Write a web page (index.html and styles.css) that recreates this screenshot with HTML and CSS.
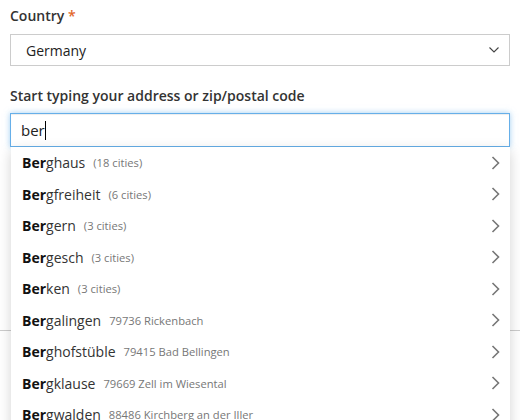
FILE: index.html
```html
<!DOCTYPE html>
<html>
<head>
<meta charset="utf-8">
<link rel="stylesheet" href="styles.css">
</head>
<body>
<div class="form">
  <div class="field">
    <label class="label">Country <span class="req">*</span></label>
    <div class="select">
      <span class="select-value">Germany</span>
      <svg class="select-caret" width="12" height="8" viewBox="0 0 12 8"><polyline points="1.5,1.5 6,6 10.5,1.5" fill="none" stroke="#444" stroke-width="1.1"/></svg>
    </div>
  </div>
  <div class="field field-address">
    <label class="label">Start typing your address or zip/postal code</label>
    <div class="input"><span class="input-text">ber</span><span class="caret"></span></div>
    <ul class="suggest">
      <li class="item"><span class="name"><b>Ber</b>ghaus</span><span class="meta">(18 cities)</span><svg class="chev" width="9" height="14" viewBox="0 0 9 14"><polyline points="1.5,1 7.5,7 1.5,13" fill="none" stroke="#777" stroke-width="1.6"/></svg></li>
      <li class="item"><span class="name"><b>Ber</b>gfreiheit</span><span class="meta">(6 cities)</span><svg class="chev" width="9" height="14" viewBox="0 0 9 14"><polyline points="1.5,1 7.5,7 1.5,13" fill="none" stroke="#777" stroke-width="1.6"/></svg></li>
      <li class="item"><span class="name"><b>Ber</b>gern</span><span class="meta">(3 cities)</span><svg class="chev" width="9" height="14" viewBox="0 0 9 14"><polyline points="1.5,1 7.5,7 1.5,13" fill="none" stroke="#777" stroke-width="1.6"/></svg></li>
      <li class="item"><span class="name"><b>Ber</b>gesch</span><span class="meta">(3 cities)</span><svg class="chev" width="9" height="14" viewBox="0 0 9 14"><polyline points="1.5,1 7.5,7 1.5,13" fill="none" stroke="#777" stroke-width="1.6"/></svg></li>
      <li class="item"><span class="name"><b>Ber</b>ken</span><span class="meta">(3 cities)</span><svg class="chev" width="9" height="14" viewBox="0 0 9 14"><polyline points="1.5,1 7.5,7 1.5,13" fill="none" stroke="#777" stroke-width="1.6"/></svg></li>
      <li class="item"><span class="name"><b>Ber</b>galingen</span><span class="meta">79736 Rickenbach</span><svg class="chev" width="9" height="14" viewBox="0 0 9 14"><polyline points="1.5,1 7.5,7 1.5,13" fill="none" stroke="#777" stroke-width="1.6"/></svg></li>
      <li class="item"><span class="name"><b>Ber</b>ghofstüble</span><span class="meta">79415 Bad Bellingen</span><svg class="chev" width="9" height="14" viewBox="0 0 9 14"><polyline points="1.5,1 7.5,7 1.5,13" fill="none" stroke="#777" stroke-width="1.6"/></svg></li>
      <li class="item"><span class="name"><b>Ber</b>gklause</span><span class="meta">79669 Zell im Wiesental</span><svg class="chev" width="9" height="14" viewBox="0 0 9 14"><polyline points="1.5,1 7.5,7 1.5,13" fill="none" stroke="#777" stroke-width="1.6"/></svg></li>
      <li class="item"><span class="name"><b>Ber</b>gwalden</span><span class="meta">88486 Kirchberg an der Iller</span><svg class="chev" width="9" height="14" viewBox="0 0 9 14"><polyline points="1.5,1 7.5,7 1.5,13" fill="none" stroke="#777" stroke-width="1.6"/></svg></li>
    </ul>
  </div>
  <div class="divider"></div>
</div>
</body>
</html>
```
FILE: styles.css
```css
html, body {
  margin: 0;
  padding: 0;
  background: #fff;
}
html {
  height: 420px;
  overflow: hidden;
}
body {
  height: 420px;
  overflow: hidden;
  font-family: "Open Sans", "Noto Sans", sans-serif;
  color: #333;
  font-size: 14px;
}
.form {
  padding: 6px 10px 0 10px;
}
.field {
  display: flex;
  flex-direction: column;
}
.label {
  font-weight: 600;
  font-size: 14px;
  line-height: 20px;
  color: #333;
  margin-bottom: 8px;
}
.req {
  color: #e2672b;
}
.select {
  height: 32px;
  box-sizing: border-box;
  border: 1px solid #ccc;
  display: flex;
  align-items: center;
  justify-content: space-between;
  padding: 0 9px 0 15px;
  margin-bottom: 20px;
}
.select-value {
  font-size: 14px;
  color: #222;
}
.field-address {
  position: relative;
}
.field-address .label {
  margin-bottom: 7px;
}
.input {
  height: 34px;
  box-sizing: border-box;
  border: 1px solid #66afe9;
  box-shadow: inset 0 1px 1px rgba(0,0,0,.075), 0 0 6px rgba(102,175,233,.6);
  display: flex;
  align-items: center;
  padding: 0 10px;
  font-size: 15px;
  color: #222;
}
.caret {
  width: 1px;
  height: 19px;
  background: #000;
}
.suggest {
  position: absolute;
  top: 61px;
  left: 1px;
  right: 0;
  margin: 0;
  padding: 0;
  list-style: none;
  background: #fff;
  box-shadow: 0 4px 12px rgba(0,0,0,.18);
  z-index: 2;
}
.item {
  height: 31.5px;
  display: flex;
  align-items: center;
  padding: 0 10px 0 11px;
}
.name {
  font-size: 14px;
  color: #333;
}
.name b {
  font-weight: 700;
  color: #111;
}
.meta {
  font-size: 11.2px;
  color: #777;
  margin-left: 8px;
  flex: 1;
}
.chev {
  flex: none;
}
.divider {
  margin: 183px -10px 0;
  border-top: 1px solid #ccc;
}
```
